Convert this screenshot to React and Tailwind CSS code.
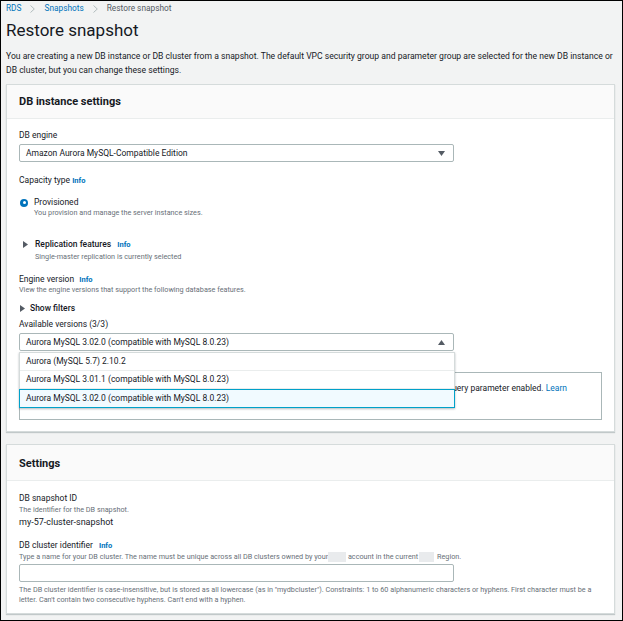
import React from 'react';

const font = { fontFamily: 'Roboto, "Liberation Sans", sans-serif' };

const Info = () => <span className="text-[#0073bb] font-bold text-[7.5px]">Info</span>;

const Caret = ({ up }) => (
  <svg width="7" height="5" viewBox="0 0 7 5" className="fill-[#545b64]">
    {up ? <path d="M0 5 L3.5 0 L7 5 Z" /> : <path d="M0 0 L7 0 L3.5 5 Z" />}
  </svg>
);

const Expand = () => (
  <svg width="5" height="7" viewBox="0 0 5 7" className="fill-[#545b64]">
    <path d="M0 0 L5 3.5 L0 7 Z" />
  </svg>
);

const Chevron = () => (
  <svg width="5" height="8" viewBox="0 0 5 8" fill="none" stroke="#aab7b8" strokeWidth="0.9">
    <path d="M0.5 0.5 L4.3 4 L0.5 7.5" />
  </svg>
);

const Label = ({ children }) => <div className="text-[8.5px] text-[#16191f] leading-[11px]">{children}</div>;
const Desc = ({ children }) => <div className="text-[7.25px] text-[#687078] leading-[10px]">{children}</div>;

const Select = ({ value, up }) => (
  <div className="w-[435px] h-[18px] border border-[#aab7b8] rounded-[2px] bg-white flex items-center justify-between pl-[6px] pr-[8px] text-[8.5px] text-[#16191f]">
    <span>{value}</span>
    <Caret up={up} />
  </div>
);

const Card = ({ title, children, hClass }) => (
  <div className="bg-white border border-[#d5dbdb] shadow-[0_1px_1px_rgba(0,28,36,0.2)]">
    <div className={`bg-[#fafafa] border-b border-[#eaeded] px-3 ${hClass} flex items-center font-bold text-[11px] text-[#16191f]`}>{title}</div>
    <div className="px-3">{children}</div>
  </div>
);

const versions = [
  'Aurora (MySQL 5.7) 2.10.2',
  'Aurora MySQL 3.01.1 (compatible with MySQL 8.0.23)',
  'Aurora MySQL 3.02.0 (compatible with MySQL 8.0.23)',
];

export default function App() {
  return (
    <div style={font} className="w-[623px] h-[621px] border border-black bg-[#f2f3f3] pl-[5px] pr-[7px] overflow-hidden">
      <div className="flex items-center h-[15px] text-[8.3px]">
        <span className="text-[#0073bb]">RDS</span>
        <span className="mx-[9px]"><Chevron /></span>
        <span className="text-[#0073bb]">Snapshots</span>
        <span className="mx-[9px]"><Chevron /></span>
        <span className="text-[#545b64]">Restore snapshot</span>
      </div>
      <h1 className="text-[17px] text-[#16191f] leading-[28px]">Restore snapshot</h1>
      <p className="text-[8.6px] text-[#16191f] leading-[14px] mt-[5px]">
        You are creating a new DB instance or DB cluster from a snapshot. The default VPC security group and parameter group are selected for the new DB instance or DB cluster, but you can change these settings.
      </p>

      <div className="mt-[7px]">
        <Card title="DB instance settings" hClass="h-[34px] pt-[2px]">
          <div className="pt-[11px] pb-[11px]">
            <Label>DB engine</Label>
            <div className="mt-[3px]"><Select value="Amazon Aurora MySQL-Compatible Edition" /></div>

            <div className="mt-[13px]"><Label>Capacity type <Info /></Label></div>

            <div className="mt-[11px] flex gap-[6px]">
              <div className="w-[8px] h-[8px] rounded-full bg-[#0073bb] flex items-center justify-center mt-[1.5px] ml-[1px]">
                <div className="w-[3px] h-[3px] rounded-full bg-white" />
              </div>
              <div>
                <Label>Provisioned</Label>
                <Desc>You provision and manage the server instance sizes.</Desc>
              </div>
            </div>

            <div className="mt-[21px] ml-[4px] flex gap-[7px]">
              <div className="mt-[2px]"><Expand /></div>
              <div>
                <Label><span className="font-medium">Replication features</span> <span className="ml-[4px]"><Info /></span></Label>
                <div className="mt-[2px]"><Desc>Single-master replication is currently selected</Desc></div>
              </div>
            </div>

            <div className="mt-[12px]"><Label>Engine version <span className="ml-[3px]"><Info /></span></Label></div>
            <Desc>View the engine versions that support the following database features.</Desc>

            <div className="mt-[8px] ml-[1px] flex items-center gap-[5px]">
              <Expand />
              <Label><span className="font-medium">Show filters</span></Label>
            </div>

            <div className="mt-[5px]"><Label>Available versions (3/3)</Label></div>
            <div className="relative mt-[3px]">
              <Select value="Aurora MySQL 3.02.0 (compatible with MySQL 8.0.23)" up />
              <div className="absolute left-0 top-[19px] w-[436px] bg-white border border-[#d5dbdb] shadow-[0_1px_2px_rgba(0,28,36,0.3)] z-10 text-[8.5px] text-[#16191f]">
                {versions.map((v, i) => (
                  <div
                    key={v}
                    className={i === 2
                      ? 'h-[19px] flex items-center pl-[6px] border border-[#00a1c9] bg-[#f1faff] -mx-px -mb-px'
                      : 'h-[18px] flex items-center pl-[6px] border-b border-[#eaeded]'}
                  >
                    {v}
                  </div>
                ))}
              </div>
              <div className="mt-[21px] h-[48px] border border-[#aab7b8] pt-[10px] text-[8.5px] leading-[11px] text-[#16191f] overflow-hidden">
                <div className="flex justify-end pr-[34px] whitespace-nowrap">
                  <span>The selected DB snapshot can't be restored to Aurora MySQL version 3 with the aurora_parallel_query parameter enabled.&nbsp;</span>
                  <span className="text-[#0073bb]">Learn</span>
                </div>
                <div className="pl-[52px] text-[#0073bb] underline">more</div>
              </div>
            </div>
          </div>
        </Card>
      </div>

      <div className="mt-[12px]">
        <Card title="Settings" hClass="h-[36px] pt-[3px]">
          <div className="pt-[11.5px] pb-[8px]">
            <Label>DB snapshot ID</Label>
            <div className="mt-[1px]"><Desc>The identifier for the DB snapshot.</Desc></div>
            <div className="mt-[1px] text-[9px] text-[#16191f] leading-[12px]">my-57-cluster-snapshot</div>

            <div className="mt-[12.5px]"><Label>DB cluster identifier <span className="ml-[4px]"><Info /></span></Label></div>
            <div className="mt-[1px]">
              <Desc>
                Type a name for your DB cluster. The name must be unique across all DB clusters owned by your
                <span className="inline-block w-[18px] h-[10px] bg-[#e9ebed] align-middle" />
                {' '}account in the current
                <span className="inline-block w-[15px] h-[10px] bg-[#e9ebed] mx-[1px] align-middle" />
                {' '}Region.
              </Desc>
            </div>
            <div className="mt-[1.5px] w-[435px] h-[18px] border border-[#aab7b8] rounded-[2px] bg-white" />
            <div className="mt-[3px] text-[7.25px] text-[#687078] leading-[10px]">
              The DB cluster identifier is case-insensitive, but is stored as all lowercase (as in "mydbcluster"). Constraints: 1 to 60 alphanumeric characters or hyphens. First character must be a letter. Can't contain two consecutive hyphens. Can't end with a hyphen.
            </div>
          </div>
        </Card>
      </div>
    </div>
  );
}
